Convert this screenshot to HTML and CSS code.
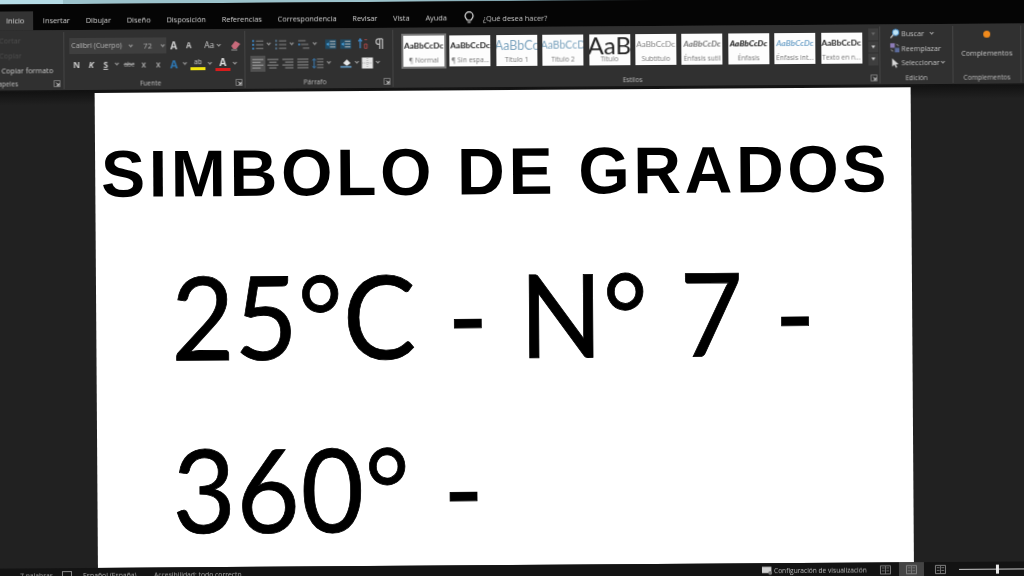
FILE: index.html
```html
<!DOCTYPE html>
<html lang="es">
<head>
<meta charset="utf-8">
<title>Simbolo de grados</title>
<link rel="stylesheet" href="styles.css">
</head>
<body>
<svg class="defs" width="0" height="0">
  <symbol id="launch" viewBox="0 0 8 8"><path d="M.5.5h7v7h-7z" fill="none" stroke="#888"/><path d="M3 3l3 3M6 3.5V6H3.5" fill="none" stroke="#ddd"/></symbol>
  <symbol id="bul" viewBox="0 0 14 12"><path d="M1 1h2v2H1zM1 5h2v2H1zM1 9h2v2H1z" fill="#3d86c4"/><path d="M5 2h8M5 6h8M5 10h8" stroke="#8a8a8a"/></symbol>
  <symbol id="num" viewBox="0 0 14 12"><path d="M1 1h2v2H1zM1 5h2v2H1zM1 9h2v2H1z" fill="#56748c"/><path d="M5 2h8M5 6h8M5 10h8" stroke="#8a8a8a"/></symbol>
  <symbol id="multi" viewBox="0 0 14 12"><path d="M1 2h8M4 6h8M6 10h7" stroke="#8a8a8a"/><path d="M1 5h2v2H1z" fill="#3d86c4"/></symbol>
  <symbol id="ind" viewBox="0 0 14 12"><path d="M1 1h12v10H1z" fill="#1f4b66"/><path d="M6 3h6M6 6h6M6 9h6" stroke="#c5c5c5"/><path d="M2 6l3-2v4z" fill="#4aa3df"/></symbol>
  <symbol id="sort" viewBox="0 0 14 14"><path d="M4 1v11M2 4l2-3 2 3" fill="none" stroke="#3d86c4" stroke-width="1.5"/><path d="M9 2h3M9 7h3v5H9z" fill="none" stroke="#b84a4a"/></symbol>
  <symbol id="pil" viewBox="0 0 10 13"><path d="M8 1H4a3 3 0 0 0 0 6h1M5 1v11M8 1v11" fill="none" stroke="#b5b5b5" stroke-width="1.4"/></symbol>
  <symbol id="al" viewBox="0 0 14 12"><path d="M1 1.5h12M1 4.5h9M1 7.5h12M1 10.5h9" stroke="#aaa"/></symbol>
  <symbol id="ac" viewBox="0 0 14 12"><path d="M1 1.5h12M3 4.5h8M1 7.5h12M3 10.5h8" stroke="#999"/></symbol>
  <symbol id="ar" viewBox="0 0 14 12"><path d="M1 1.5h12M4 4.5h9M1 7.5h12M4 10.5h9" stroke="#999"/></symbol>
  <symbol id="aj" viewBox="0 0 14 12"><path d="M1 1.5h12M1 4.5h12M1 7.5h12M1 10.5h12" stroke="#999"/></symbol>
  <symbol id="spc" viewBox="0 0 14 12"><path d="M6 1.5h7M6 4.5h7M6 7.5h7M6 10.5h7" stroke="#8a8a8a"/><path d="M3 1v10M1 3l2-2 2 2M1 9l2 2 2-2" fill="none" stroke="#3d86c4"/></symbol>
  <symbol id="shade" viewBox="0 0 14 12"><path d="M4 6l4-4 4 4-4 3z" fill="#e8e8e8"/><path d="M1 9h12v2H1z" fill="#5d8fb5"/></symbol>
  <symbol id="bord" viewBox="0 0 12 12"><path d="M.5.5h11v11H.5z" fill="#e6e6e6"/><path d="M6 1v10M1 6h10" stroke="#aaa" stroke-dasharray="1 1"/></symbol>
  <symbol id="erase" viewBox="0 0 12 12"><path d="M2 7l4-5 5 3-4 5H4z" fill="#c76a7a"/><path d="M2 11h6" stroke="#999"/></symbol>
  <symbol id="find" viewBox="0 0 12 12"><circle cx="7" cy="4.500" r="3.500" fill="#bfe3f5" stroke="#3d86c4"/><path d="M4.500 7L1.500 10.500" stroke="#cfcfcf" stroke-width="1.500"/></symbol>
  <symbol id="repl" viewBox="0 0 12 12"><path d="M1 1h5v5H1z" fill="#8d7cb8"/><path d="M6 6h5v5H6z" fill="#5b6b9c"/><path d="M8 2l2 2M2 8l2 2" stroke="#ccc"/></symbol>
  <symbol id="arrow" viewBox="0 0 10 12"><path d="M2 1v9l2.500-2 1.500 3.500 1.500-.7L6 7.500h3z" fill="#d8d8d8"/></symbol>
  <symbol id="lamp" viewBox="0 0 10 13"><path d="M3.200 9C2.400 7.500 1 6.700 1 4.700a4 4 0 0 1 8 0C9 6.700 7.600 7.500 6.800 9zM3.500 11h3" fill="none" stroke="#e4e4e4" stroke-width="1.200"/></symbol>
  <symbol id="cfg" viewBox="0 0 14 12"><path d="M0 1h12v8H0z" fill="#cfcfcf"/><circle cx="10.500" cy="9" r="2.500" fill="#777"/></symbol>
  <symbol id="view" viewBox="0 0 12 10"><path d="M.5.5h11v9H.5z" fill="none" stroke="#8a8a8a"/><path d="M6 1v8M2 3h3M7 3h3M2 6h3M7 6h3" stroke="#777"/></symbol>
</svg>

<div class="app">
  <div class="topline"></div>
  <nav class="tabs">
    <span class="tab active">Inicio</span>
    <span class="tab">Insertar</span>
    <span class="tab">Dibujar</span>
    <span class="tab">Diseño</span>
    <span class="tab">Disposición</span>
    <span class="tab">Referencias</span>
    <span class="tab">Correspondencia</span>
    <span class="tab">Revisar</span>
    <span class="tab">Vista</span>
    <span class="tab">Ayuda</span>
    <span class="tell"><svg class="lamp"><use href="#lamp"/></svg>¿Qué desea hacer?</span>
  </nav>

  <section class="ribbon">
    <div class="group clip">
      <div class="clip-rows">
        <div class="clip-row dim">Cortar</div>
        <div class="clip-row dim">Copiar</div>
        <div class="clip-row">Copiar formato</div>
      </div>
      <div class="glabel clip-label">Portapapeles<svg class="launch"><use href="#launch"/></svg></div>
    </div>

    <div class="group font">
      <div class="gbody">
        <div class="row">
          <div class="fontbox"><span class="fname">Calibri (Cuerpo)</span><i class="chev"></i><span class="fsize">72</span><i class="chev"></i></div>
          <span class="btn b15 big">A</span>
          <span class="btn b15 small">A</span>
          <span class="btn caseb">Aa<i class="chev"></i></span>
          <span class="btn b15"><svg class="ic12"><use href="#erase"/></svg></span>
        </div>
        <div class="row row2">
          <b class="btn b145">N</b>
          <b class="btn b145 it">K</b>
          <b class="btn b145 un">S</b>
          <i class="chev solo"></i>
          <span class="btn b145 abc">abc</span>
          <span class="btn b145 xx">x</span>
          <span class="btn b145 xx">x</span>
          <span class="btn b15 fx">A</span><i class="chev solo"></i>
          <span class="btn b15 hl">ab</span><i class="chev solo"></i>
          <span class="btn b15 red">A</span><i class="chev solo"></i>
        </div>
      </div>
      <div class="glabel shifted">Fuente<svg class="launch"><use href="#launch"/></svg></div>
    </div>

    <div class="group para">
      <div class="gbody">
        <div class="row">
          <span class="btn b15"><svg class="ic14"><use href="#bul"/></svg></span><i class="chev solo"></i>
          <span class="btn b15"><svg class="ic14"><use href="#num"/></svg></span><i class="chev solo"></i>
          <span class="btn b15"><svg class="ic14"><use href="#multi"/></svg></span><i class="chev solo"></i>
          <span class="btn b15 ind1"><svg class="ic14"><use href="#ind"/></svg></span>
          <span class="btn b15"><svg class="ic14"><use href="#ind"/></svg></span>
          <span class="btn b15 sp"><svg class="ic14"><use href="#sort"/></svg></span>
          <span class="btn b15 sp"><svg class="ic14"><use href="#pil"/></svg></span>
        </div>
        <div class="row row2">
          <span class="btn b15 on"><svg class="ic14"><use href="#al"/></svg></span>
          <span class="btn b15"><svg class="ic14"><use href="#ac"/></svg></span>
          <span class="btn b15"><svg class="ic14"><use href="#ar"/></svg></span>
          <span class="btn b15"><svg class="ic14"><use href="#aj"/></svg></span>
          <span class="btn b15"><svg class="ic14"><use href="#spc"/></svg></span><i class="chev solo"></i>
          <span class="btn b15 shd"><svg class="ic14"><use href="#shade"/></svg></span><i class="chev solo"></i>
          <span class="btn b15 brd"><svg class="ic12"><use href="#bord"/></svg></span><i class="chev solo"></i>
        </div>
      </div>
      <div class="glabel shifted">Párrafo<svg class="launch"><use href="#launch"/></svg></div>
    </div>

    <div class="group styles">
      <div class="gallery">
        <div class="tile sel"><span class="tp b">AaBbCcDc</span><span class="tn">¶ Normal</span></div>
        <div class="tile"><span class="tp b">AaBbCcDc</span><span class="tn">¶ Sin espa...</span></div>
        <div class="tile"><span class="tp h1">AaBbCc</span><span class="tn">Título 1</span></div>
        <div class="tile"><span class="tp h2">AaBbCcD</span><span class="tn">Título 2</span></div>
        <div class="tile"><span class="tp ti">AaB</span><span class="tn">Título</span></div>
        <div class="tile"><span class="tp su">AaBbCcDc</span><span class="tn">Subtítulo</span></div>
        <div class="tile"><span class="tp es">AaBbCcDc</span><span class="tn">Énfasis sutil</span></div>
        <div class="tile"><span class="tp en">AaBbCcDc</span><span class="tn">Énfasis</span></div>
        <div class="tile"><span class="tp ei">AaBbCcDc</span><span class="tn">Énfasis int...</span></div>
        <div class="tile"><span class="tp b">AaBbCcDc</span><span class="tn">Texto en n...</span></div>
        <div class="scroll"><i class="up"></i><i class="dn"></i><i class="more"></i></div>
      </div>
      <div class="glabel shifted">Estilos<svg class="launch"><use href="#launch"/></svg></div>
    </div>

    <div class="group edit">
      <div class="erows">
        <div class="erow"><svg class="ic11"><use href="#find"/></svg>Buscar<i class="chev e1"></i></div>
        <div class="erow"><svg class="ic11"><use href="#repl"/></svg>Reemplazar</div>
        <div class="erow"><svg class="ic11"><use href="#arrow"/></svg>Seleccionar<i class="chev e2"></i></div>
      </div>
      <div class="glabel">Edición</div>
    </div>

    <div class="group addin">
      <div class="addbody"><i class="dot"></i><span>Complementos</span></div>
      <div class="glabel">Complementos</div>
    </div>
  </section>

  <main class="work">
    <article class="page">
      <h1 class="title">SIMBOLO DE GRADOS</h1>
      <p class="big-line">25°C - N° 7 -</p>
      <p class="big-line wide">360° -</p>
    </article>
  </main>

  <footer class="status">
    <div class="sleft">
      <span class="words">7 palabras</span>
      <span class="pg"></span>
      <span class="lang">Español (España)</span>
      <span class="acc">Accesibilidad: todo correcto</span>
    </div>
    <div class="sright">
      <span class="cfg"><svg class="ic11"><use href="#cfg"/></svg>Configuración de visualización</span>
      <span class="vw"><svg class="ic11"><use href="#view"/></svg></span>
      <span class="vw act"><svg class="ic11"><use href="#view"/></svg></span>
      <span class="vw"><svg class="ic11"><use href="#view"/></svg></span>
      <span class="zoom"><i class="knob"></i></span>
    </div>
  </footer>
</div>
</body>
</html>
```
FILE: styles.css
```css
* { box-sizing: border-box; }
html, body { margin: 0; height: 100%; }
body { background: #050505; overflow: hidden; width: 1024px; height: 576px; position: relative; }
.defs { position: absolute; }

.app {
  width: 1040px; height: 592px;
  margin: -8px 0 0 -8px;
  display: flex; flex-direction: column;
  transform: rotate(-0.4deg);
  transform-origin: 520px 296px;
  font-family: "Open Sans", "Liberation Sans", sans-serif;
  color: #c8c8c8;
  background: #212121;
}

.topline { height: 9px; background: linear-gradient(90deg, #b5dce6 0 7%, #9cc3cc 7% 40%, #5c7c86 60%, #2a3a40 100%); flex: none; }

.tabs {
  height: 26px; flex: none; background: #050505;
  display: flex; align-items: flex-end;
  padding: 0 0 0 8px;
  font-size: 7.400px; filter: blur(.3px);
}
.tab { height: 19px; line-height: 18px; padding: 0 7.900px; color: #d0d0d0; }
.tab.active { background: #333; color: #d8d8d8; margin-right: 2.100px; padding: 0 8.500px 0 8px; }
.tell { height: 19px; line-height: 18px; display: flex; align-items: center; margin-left: 1px; color: #c4c4c4; }
.lamp { width: 10px; height: 13px; margin: 0 9px 0 8px; }

.ribbon {
  height: 61px; flex: none; background: #303030;
  border-bottom: 1px solid #111;
  display: flex; padding-left: 8px;
  font-size: 7.300px; filter: blur(.35px);
}
.group { position: relative; display: flex; flex-direction: column; border-right: 1px solid #444; margin: 2px 0 1px; }
.gbody { height: 48px; padding: 5px 0 0 5px; }
.glabel { position: relative; height: 10px; line-height: 10px; text-align: center; font-size: 6.600px; color: #bdbdbd; }
.glabel.shifted { padding-right: 8px; }
.launch { position: absolute; right: 2px; top: 1px; width: 7px; height: 7px; }

.clip { width: 66px; overflow: hidden; }
.clip-rows { height: 48px; padding-top: 1px; }
.clip-row { height: 15px; line-height: 14px; padding-left: 3px; font-size: 7.300px; white-space: nowrap; }
.clip-row.dim { color: #4f4f4f; padding-left: 1px; }
.clip-label { text-align: left; margin-left: -21px; white-space: nowrap; }
.clip-label .launch { right: 3px; }

.font { width: 181px; }
.para { width: 148px; }
.row { display: flex; align-items: center; height: 17px; }
.row2 { margin-top: 2px; }
.btn { display: flex; align-items: center; justify-content: center; height: 16px; flex: none; font-style: normal; }
.b15 { width: 15px; }
.b145 { width: 14.500px; }
.fontbox { width: 97px; height: 16px; background: #3f3f3f; display: flex; align-items: center; padding-left: 2px; font-size: 7px; color: #b5b5b5; }
.fname { width: 60px; white-space: nowrap; }
.fsize { width: 20px; margin-left: 6px; padding-left: 3px; font-size: 7.500px; }
.chev { display: inline-block; width: 3px; height: 3px; border-right: 1px solid #aaa; border-bottom: 1px solid #aaa; transform: rotate(45deg); flex: none; margin: -1px 2px 0; }
.chev.solo { width: 3px; margin: -2px 3px 0 2px; }
.big { font-size: 10px; font-weight: 700; color: #d0d0d0; }
.small { font-size: 8px; font-weight: 700; color: #c0c0c0; margin-right: 4px; }
.caseb { width: 26px; font-size: 8.500px; color: #c4c4c4; gap: 1px; margin-right: 1px; }
.ic12 { width: 12px; height: 12px; }
.ic14 { width: 13px; height: 12px; }
.ic11 { width: 11px; height: 11px; flex: none; }
.row2 b { font-size: 8.500px; color: #c8c8c8; }
.it { font-style: italic; }
.un { text-decoration: underline; }
.abc { font-size: 6.500px; text-decoration: line-through; color: #aaa; margin-left: 1px; }
.xx { font-size: 8.500px; font-weight: 600; color: #aaa; }
.fx { font-size: 11px; font-weight: 700; color: #2d78b5; margin-left: 1px; }
.hl { font-size: 7px; color: #c9c9c9; border-bottom: 3px solid #f2e60f; height: 13px; margin: 0 1px; line-height: 8px; }
.red { font-size: 10px; font-weight: 700; color: #ddd; border-bottom: 3px solid #d81c1c; height: 14px; margin: 0 1px; }
.ind1 { margin-left: 4px; }
.sp { margin-left: 2px; }
.shd { margin-left: 5px; }
.brd { margin-left: -2px; }
.on { background: #515151; }

.styles { width: 487px; }
.gallery { height: 48px; display: flex; gap: 5.400px; padding: 6px 0 0 10px; }
.tile { width: 41px; height: 31px; background: #fdfdfd; display: flex; flex-direction: column; align-items: center; overflow: hidden; padding-top: 3px; }
.tile.sel { outline: 2px solid #777; }
.tp { height: 15px; line-height: 15px; font-size: 8.300px; white-space: nowrap; color: #222; font-family: Lato, sans-serif; }
.tn { font-size: 6.800px; line-height: 11px; color: #777; white-space: nowrap; margin-top: 1px; }
.b { font-weight: 700; }
.h1 { font-size: 12.500px; color: #7fa6c0; }
.h2 { font-size: 10.500px; color: #7fa6c0; }
.ti { font-size: 24px; line-height: 15px; color: #222; font-weight: 400; }
.su { color: #888; }
.es { color: #777; font-style: italic; font-weight: 700; }
.en { font-style: italic; font-weight: 900; color: #222; }
.ei { color: #76a7cc; font-style: italic; font-weight: 700; }
.scroll { width: 10px; display: flex; flex-direction: column; gap: 1px; margin-left: 1px; margin-top: -4px; }
.scroll i { display: block; height: 11.500px; background: #3e3e3e; position: relative; }
.scroll i::after { content: ""; position: absolute; left: 3px; top: 4px; border: 2px solid transparent; border-top: 3px solid #ccc; border-bottom: 0; }
.scroll .up::after { border-top-color: #666; }

.edit { width: 73px; }
.erows { height: 48px; padding: 0 0 0 9px; }
.erow { height: 14.500px; display: flex; align-items: center; font-size: 7.200px; white-space: nowrap; color: #c0c0c0; }
.erow .ic11 { margin-right: 1px; }
.e1 { margin-left: 6px; }
.e2 { margin-left: 2px; }

.addin { width: 68px; }
.addbody { height: 48px; display: flex; flex-direction: column; align-items: center; font-size: 7.200px; color: #c4c4c4; padding-top: 5px; }
.dot { width: 7px; height: 7px; border-radius: 50%; background: #f08a1c; margin-bottom: 10px; }

.work { flex: 1; min-height: 0; background: linear-gradient(#111 0, #212121 14px); display: flex; padding: 2px 0 0 104px; }
.page { width: 816px; background: #fff; color: #000; padding: 0 0 0 6px; overflow: hidden; }
.title { margin: 0; padding-top: 46px; height: 137px; font: 700 66px/70px "Liberation Sans", sans-serif; letter-spacing: 3.700px; white-space: nowrap; }
.big-line {
  margin: 0 0 0 69px; font: 400 116px/173px Lato, sans-serif; white-space: pre;
  word-spacing: 4px; -webkit-text-stroke: .8px #000;
  transform: scaleX(.94); transform-origin: 0 50%;
}
.big-line.wide { letter-spacing: .9px; }

.status {
  height: 19px; flex: none; background: #131313; display: flex; justify-content: space-between;
  font-size: 6.800px; color: #a8a8a8; padding: 0 0 0 26px; filter: blur(.35px);
}
.sleft, .sright { display: flex; height: 14px; align-items: center; white-space: nowrap; }
.words { width: 42px; }
.pg { width: 10px; height: 9px; border: 1px solid #888; margin-right: 11px; }
.lang { width: 71px; }
.acc { width: 100px; }
.sright { margin-right: -1px; }
.cfg { display: flex; align-items: center; gap: 1px; width: 105px; color: #bbb; font-size: 6.600px; }
.vw { width: 25px; height: 14px; display: flex; align-items: center; justify-content: center; margin-right: -8px; margin-left: 6px; }
.vw.act { background: #444; margin-left: 9px; margin-right: -2px; }
.zoom { width: 76px; height: 1px; background: #ccc; margin-left: 14px; position: relative; }
.knob { position: absolute; left: 37px; top: -4px; width: 3px; height: 9px; background: #e8e8e8; }
```
